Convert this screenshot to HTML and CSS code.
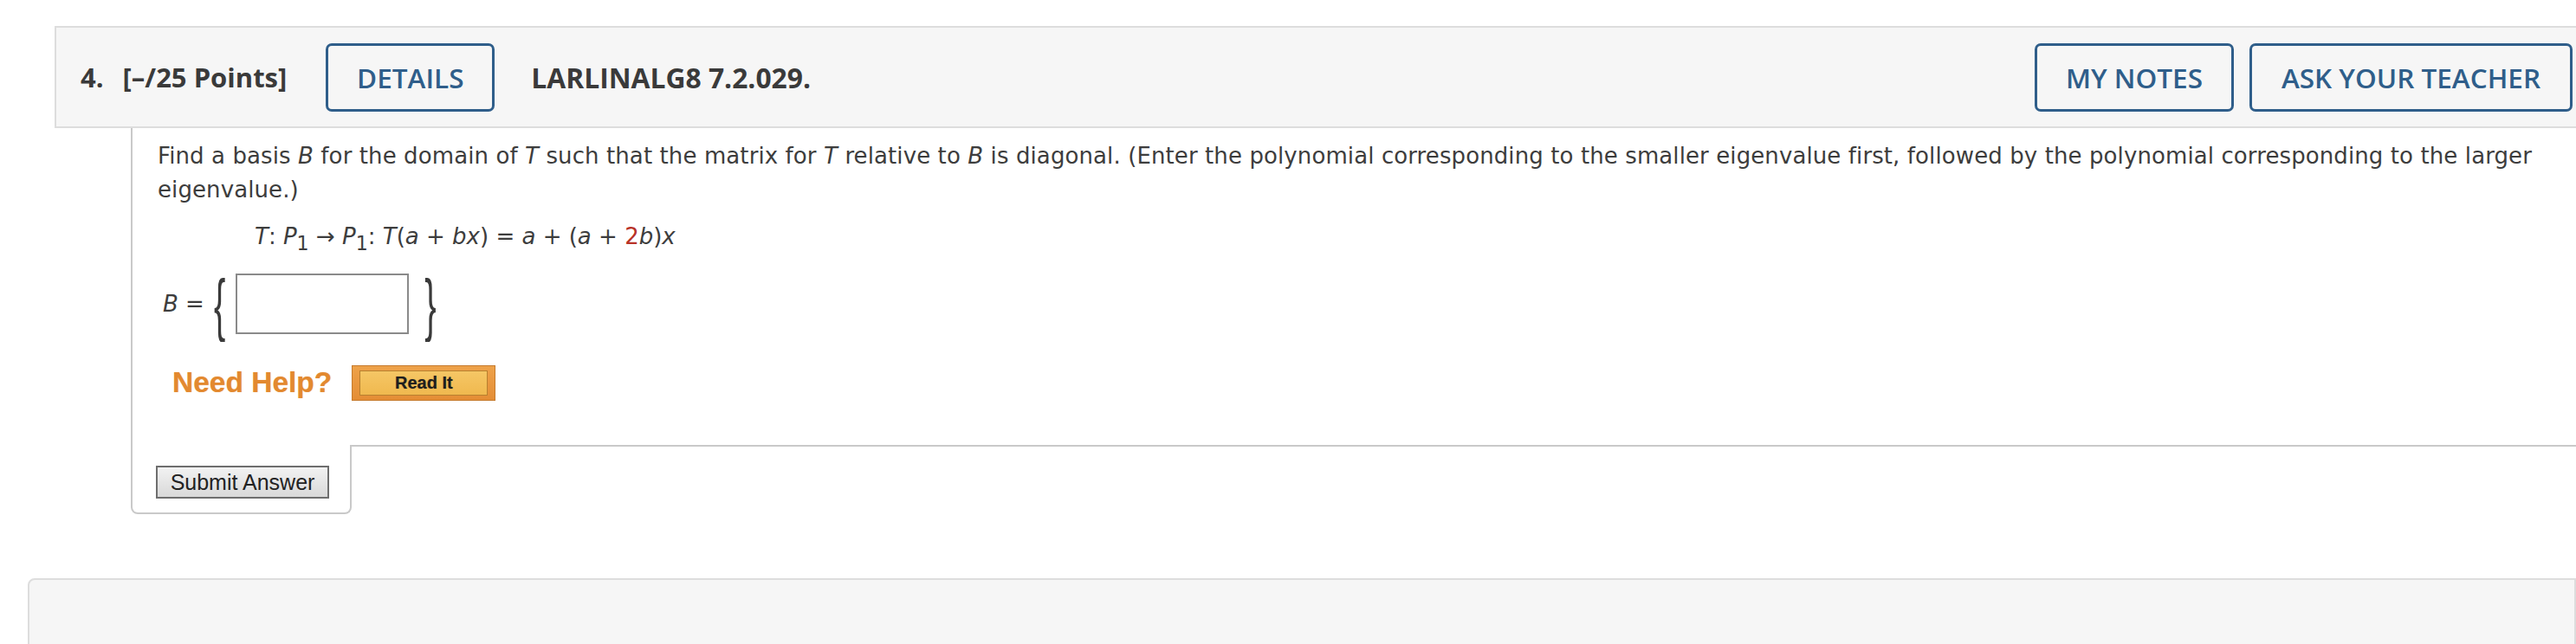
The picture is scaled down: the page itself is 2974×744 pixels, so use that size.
FILE: index.html
```html
<!DOCTYPE html>
<html lang="en">
<head>
<meta charset="utf-8">
<title>Question 4</title>
<link rel="stylesheet" href="styles.css">
</head>
<body>
<div class="page">
  <div class="question">
    <div class="qheader">
      <span class="qnum">4.</span>
      <span class="qpts">[–/25 Points]</span>
      <button class="hbtn details">DETAILS</button>
      <span class="qcode">LARLINALG8 7.2.029.</span>
      <div class="hright">
        <button class="hbtn notes">MY NOTES</button>
        <button class="hbtn ask">ASK YOUR TEACHER</button>
      </div>
    </div>
    <div class="qcontent">
      <div class="qbody">
        <p class="prompt">Find a basis <i>B</i> for the domain of <i>T</i> such that the matrix for <i>T</i> relative to <i>B</i> is diagonal. (Enter the polynomial corresponding to the smaller eigenvalue first, followed by the polynomial corresponding to the larger eigenvalue.)</p>
        <div class="formula"><i>T</i>: <i>P</i><sub>1</sub> → <i>P</i><sub>1</sub>: <i>T</i>(<i>a</i> + <i>bx</i>) = <i>a</i> + (<i>a</i> + <span class="red">2</span><i>b</i>)<i>x</i></div>
        <div class="basis">
          <span class="blabel"><i>B</i> =</span>
          <span class="brace">{</span>
          <input class="ans" type="text" aria-label="answer">
          <span class="brace rb">}</span>
        </div>
        <div class="help">
          <span class="needhelp">Need Help?</span>
          <span class="readit"><span class="readit-in">Read It</span></span>
        </div>
      </div>
      <div class="qfooter">
        <div class="tab"><button class="submit">Submit Answer</button></div>
        <div class="filler"></div>
      </div>
    </div>
  </div>
  <div class="nextpanel"></div>
</div>
</body>
</html>
```
FILE: styles.css
```css
html, body {
  margin: 0;
  padding: 0;
  overflow: hidden;
  background: #ffffff;
}
.page {
  width: 2974px;
  padding-top: 30px;
}
.question {
  margin-left: 63px;
  width: 2927px;
}
.qheader {
  box-sizing: border-box;
  height: 118px;
  display: flex;
  align-items: center;
  padding: 0 18px 0 28px;
  background: #f6f6f6;
  border: 2px solid #dddddd;
  font-family: "Open Sans", "DejaVu Sans", sans-serif;
  color: #3a3a3a;
}
.qnum, .qpts, .qcode {
  font-weight: 700;
  font-size: 31px;
  white-space: nowrap;
}
.qnum { margin-right: 22px; }
.qpts { margin-right: 3px; }
.qcode { margin-left: 42px; font-size: 31.8px; }
.hbtn {
  box-sizing: border-box;
  height: 79px;
  background: transparent;
  border: 3px solid #2f5e8a;
  border-radius: 7px;
  color: #2f5e8a;
  font-family: "Open Sans", "DejaVu Sans", sans-serif;
  font-weight: 600;
  font-size: 31.5px;
  padding: 0;
  white-space: nowrap;
}
.details { width: 195px; margin-left: 42px; }
.hright {
  margin-left: auto;
  display: flex;
  gap: 18px;
}
.notes { width: 230px; }
.ask { width: 373px; }

.qcontent {
  margin-left: 88px;
}
.qbody {
  box-sizing: border-box;
  height: 366px;
  border-left: 2px solid #c9c9c9;
  border-right: 2px solid #c9c9c9;
  padding: 13px 30px 0 29px;
  font-family: "DejaVu Sans", Verdana, sans-serif;
  font-size: 26px;
  color: #3d3d3d;
}
.prompt {
  margin: 0;
  line-height: 39px;
  letter-spacing: 0.1px;
}
.formula {
  margin-top: 15px;
  margin-left: 112px;
  line-height: 39px;
  white-space: nowrap;
}
.formula sub {
  font-size: 0.85em;
  vertical-align: -0.3em;
  line-height: 0;
}
.red { color: #b83227; }
.basis {
  display: flex;
  align-items: center;
  height: 76px;
  margin-top: 20px;
  margin-left: 6px;
}
.blabel { white-space: nowrap; }
.brace {
  display: inline-block;
  font-family: "Liberation Sans", Arial, sans-serif;
  font-size: 40px;
  line-height: 40px;
  color: #3a3a3a;
  transform: scaleY(2);
  margin-left: 11px;
}
.brace.rb { margin-left: 18px; }
.ans {
  box-sizing: border-box;
  width: 200px;
  height: 70px;
  margin: 0 0 0 12px;
  border: 2px solid #8a8a8a;
  border-radius: 0;
  background: #ffffff;
  padding: 0;
}
.help {
  display: flex;
  align-items: center;
  margin-top: 32px;
  margin-left: 17px;
  height: 42px;
}
.needhelp {
  font-family: "Liberation Sans", Arial, sans-serif;
  font-weight: 700;
  font-size: 33.5px;
  color: #e3892f;
  text-shadow: 0 0 1px rgba(227, 137, 47, 0.6);
  white-space: nowrap;
}
.readit {
  box-sizing: border-box;
  margin-left: 23px;
  width: 166px;
  height: 41px;
  padding: 5px 8px;
  background: linear-gradient(#eea24a, #e48d35);
  border: 1px solid #c57a2c;
  display: flex;
}
.readit-in {
  flex: 1;
  display: flex;
  align-items: center;
  justify-content: center;
  background: linear-gradient(#f5c665, #f0b94f);
  border: 1px solid #b8802f;
  font-family: "Liberation Sans", Arial, sans-serif;
  font-weight: 700;
  font-size: 20px;
  color: #1e1e1e;
  text-shadow: 0 0 1px rgba(0, 0, 0, 0.4);
}
.qfooter {
  display: flex;
}
.tab {
  box-sizing: border-box;
  width: 255px;
  border: 2px solid #c9c9c9;
  border-top: none;
  border-radius: 0 0 8px 8px;
  padding: 24px 0 16px 27px;
}
.submit {
  box-sizing: border-box;
  display: block;
  width: 200px;
  height: 38px;
  border: 2px solid #6e6e6e;
  background: linear-gradient(#f2f2f2, #d9d9d9);
  font-family: "Liberation Sans", Arial, sans-serif;
  font-size: 25px;
  color: #222222;
  padding: 0;
}
.filler {
  flex: 1;
  border-top: 2px solid #c9c9c9;
}
.nextpanel {
  margin-top: 74px;
  margin-left: 32px;
  height: 120px;
  background: #f6f6f6;
  border: 2px solid #dddddd;
  border-top-left-radius: 8px;
}
```
